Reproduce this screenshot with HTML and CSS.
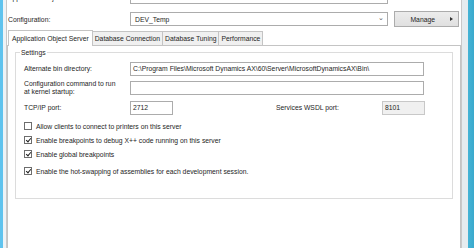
FILE: index.html
```html
<!DOCTYPE html>
<html lang="en">
<head>
    <meta charset="UTF-8">
    <title>Server Configuration</title>
    <link rel="stylesheet" href="styles.css">
</head>
<body>
    <div class="screen">
        <div class="edge-left"></div>
        <div class="dialog">
            <div class="row row-instance">
                <span class="label">Application Object Server Instance:</span>
                <div class="combo"></div>
            </div>

            <div class="row row-config">
                <span class="label">Configuration:</span>
                <div class="combo">
                    <span class="combo-text">DEV_Temp</span>
                    <span class="caret">&#8964;</span>
                </div>
                <button class="manage">
                    <span>Manage</span>
                    <span class="tri"></span>
                </button>
            </div>

            <div class="tabs">
                <div class="tab active">Application Object Server</div>
                <div class="tab">Database Connection</div>
                <div class="tab">Database Tuning</div>
                <div class="tab">Performance</div>
            </div>

            <div class="panel">
                <fieldset class="group">
                    <legend>Settings</legend>

                    <div class="field">
                        <label>Alternate bin directory:</label>
                        <div class="input wide">C:\Program Files\Microsoft Dynamics AX\60\Server\MicrosoftDynamicsAX\Bin\</div>
                    </div>
                    <div class="field field-tall">
                        <label>Configuration command to run<br>at kernel startup:</label>
                        <div class="input wide"></div>
                    </div>
                    <div class="field">
                        <label>TCP/IP port:</label>
                        <div class="input short">2712</div>
                        <label class="wsdl-label">Services WSDL port:</label>
                        <div class="input short disabled">8101</div>
                    </div>

                    <div class="checks">
                        <div class="check"><span class="box"></span>Allow clients to connect to printers on this server</div>
                        <div class="check on"><span class="box"></span>Enable breakpoints to debug X++ code running on this server</div>
                        <div class="check on"><span class="box"></span>Enable global breakpoints</div>
                        <div class="check on last"><span class="box"></span>Enable the hot-swapping of assemblies for each development session.</div>
                    </div>
                </fieldset>
            </div>
        </div>
        <div class="edge-right"></div>
    </div>
</body>
</html>
```

FILE: styles.css
```css
* {
    margin: 0;
    padding: 0;
    box-sizing: border-box;
}

body {
    font-family: 'Liberation Sans', Arial, sans-serif;
    font-size: 6.8px;
    color: #1e1e1e;
    background: #ffffff;
    width: 474px;
    height: 248px;
    overflow: hidden;
}

.screen {
    display: flex;
    height: 248px;
}

.edge-left {
    width: 7px;
    border-left: 3px solid #5fc3ee;
    background: #eef3f6;
    border-right: 1px solid #c9c9c9;
    flex: none;
}

.edge-right {
    width: 13px;
    flex: none;
    border-left: 1px solid #c9c9c9;
    background: linear-gradient(90deg, #e6ecef 0, #e6ecef 6px, #45b4d6 6px, #3aa9cc 100%);
}

.dialog {
    flex: 1;
    background: #ffffff;
    display: flex;
    flex-direction: column;
}

.row {
    display: flex;
    align-items: center;
}

.row-instance {
    height: 14px;
    margin-top: -10px;
}

.row .label {
    width: 123px;
    padding-left: 1px;
    white-space: nowrap;
}

.combo {
    width: 258px;
    height: 14px;
    border: 1px solid #acacac;
    background: #ffffff;
    display: flex;
    align-items: center;
    justify-content: space-between;
    padding: 0 3px 0 4px;
}

.row-config {
    margin-top: 7px;
    height: 16px;
}

.caret {
    font-size: 7px;
    color: #555;
    line-height: 1;
    margin-top: -3px;
}

.manage {
    margin-left: 6px;
    width: 65px;
    height: 16px;
    border: 1px solid #acacac;
    background: linear-gradient(#ececec, #e0e0e0);
    font-family: inherit;
    font-size: 6.8px;
    color: #1e1e1e;
    display: flex;
    align-items: center;
    justify-content: flex-end;
    padding-right: 5px;
    gap: 15px;
}

.tri {
    width: 0;
    height: 0;
    border-left: 3px solid #333;
    border-top: 2.5px solid transparent;
    border-bottom: 2.5px solid transparent;
}

.tabs {
    display: flex;
    margin-top: 3px;
    padding-left: 1px;
    height: 15px;
    align-items: flex-end;
}

.tab {
    height: 14px;
    border: 1px solid #c4c4c4;
    border-bottom: none;
    background: #f0f0f0;
    padding: 0 2px;
    display: flex;
    align-items: center;
    margin-left: -1px;
    white-space: nowrap;
}

.tab.active {
    height: 16px;
    background: #ffffff;
    margin-bottom: -1px;
    position: relative;
    z-index: 1;
    margin-left: 0;
    padding: 0 3px 1px;
}

.panel {
    flex: 1;
    border: 1px solid #c4c4c4;
    border-bottom: none;
    background: #ffffff;
    padding: 3px 7px 0 7px;
}

.group {
    border: 1px solid #dcdcdc;
    height: 150px;
    padding: 3px 0 0 8px;
}

.group legend {
    margin-left: -4px;
    padding: 0 1px;
}

.field {
    display: flex;
    align-items: center;
    height: 19px;
}

.field-tall {
    height: 20px;
}

.field label {
    width: 106px;
    line-height: 8px;
    white-space: nowrap;
}

.input {
    height: 14px;
    border: 1px solid #acacac;
    background: #ffffff;
    display: flex;
    align-items: center;
    padding-left: 2px;
    white-space: nowrap;
    overflow: hidden;
}

.input.wide {
    width: 294px;
}

.input.short {
    width: 43px;
}

.input.disabled {
    background: #f0f0f0;
    border-color: #c8c8c8;
}

.field .wsdl-label {
    margin-left: 103px;
    width: 106px;
}

.checks {
    margin-top: 2px;
}

.check {
    display: flex;
    align-items: center;
    height: 14px;
    gap: 4px;
}

.check.last {
    margin-top: 3px;
}

.box {
    width: 8px;
    height: 8px;
    border: 1px solid #6d6d6d;
    background: #ffffff;
    position: relative;
}

.check.on .box::after {
    content: '';
    position: absolute;
    left: 1.5px;
    top: 0;
    width: 2px;
    height: 4px;
    border-right: 1.5px solid #222;
    border-bottom: 1.5px solid #222;
    transform: rotate(40deg);
}
```
